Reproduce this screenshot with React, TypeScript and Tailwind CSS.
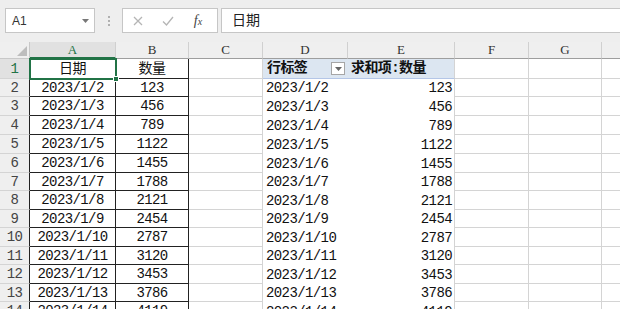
const cols = [
  { key: "A", w: "w-[86px]" },
  { key: "B", w: "w-[73px]" },
  { key: "C", w: "w-[74px]" },
  { key: "D", w: "w-[85px]" },
  { key: "E", w: "w-[107px]" },
  { key: "F", w: "w-[74px]" },
  { key: "G", w: "w-[73px]" },
  { key: "H", w: "w-[80px]" },
];

const values = [123, 456, 789, 1122, 1455, 1788, 2121, 2454, 2787, 3120, 3453, 3786, 4119];

// row heights measured off the sheet
const rowH = [
  "h-[20px]", "h-[18px]", "h-[19px]", "h-[19px]", "h-[19px]", "h-[19px]", "h-[18px]",
  "h-[19px]", "h-[18px]", "h-[19px]", "h-[18px]", "h-[19px]", "h-[18px]", "h-[19px]",
];

const cellFont = { fontFamily: '"Liberation Mono", "Noto Sans CJK SC", monospace' };
const txt = "text-[14px] tracking-[-0.6px] text-[#111]";

function Row({ r }: { r: number }) {
  const isHead = r === 1;
  const a = isHead ? "日期" : `2023/1/${r}`;
  const b = isHead ? "数量" : String(values[r - 2]);
  return (
    <div className={`flex ${rowH[r - 1]}`}>
      <div
        className={`w-[30px] shrink-0 flex items-center justify-center pt-[1px] border-b border-b-[#d4d4d4] border-r text-[14px] tracking-[-0.6px] ${
          isHead ? "bg-[#e1e1e1] text-[#217346] border-r-[#217346]" : "bg-[#efefef] text-[#444] border-r-[#222]"
        }`}
      >
        {r}
      </div>
      <div className={`${cols[0].w} shrink-0 flex items-center justify-center pt-[1px] border-r border-b border-[#222] ${txt}`}>
        {a}
      </div>
      <div className={`${cols[1].w} shrink-0 flex items-center justify-center pt-[1px] border-r border-b border-[#222] ${txt}`}>
        {b}
      </div>
      <div className={`${cols[2].w} shrink-0 border-r border-b border-[#d4d4d4]`} />
      {isHead ? (
        <>
          <div className={`${cols[3].w} shrink-0 flex items-center justify-between pl-[4px] pr-[3px] bg-[#dce6f1] border-b border-[#b4c6e7] ${txt} font-bold`}>
            <span>行标签</span>
            <span className="w-[14px] h-[13px] bg-white border border-[#a6a6a6] flex items-center justify-center">
              <svg width="7" height="4" viewBox="0 0 7 4">
                <path d="M0 0 L7 0 L3.5 4 Z" fill="#666" />
              </svg>
            </span>
          </div>
          <div className={`${cols[4].w} shrink-0 flex items-center pl-[3px] bg-[#dce6f1] border-r border-r-[#d4d4d4] border-b border-b-[#b4c6e7] ${txt} font-bold`}>
            求和项:数量
          </div>
        </>
      ) : (
        <>
          <div className={`${cols[3].w} shrink-0 flex items-center pl-[3px] pt-[1px] whitespace-nowrap ${txt}`}>
            {a}
          </div>
          <div className={`${cols[4].w} shrink-0 flex items-center justify-end pr-[2px] pt-[1px] border-r border-[#d4d4d4] ${txt}`}>
            {b}
          </div>
        </>
      )}
      <div className={`${cols[5].w} shrink-0 border-r border-b border-[#d4d4d4]`} />
      <div className={`${cols[6].w} shrink-0 border-r border-b border-[#d4d4d4]`} />
      <div className={`${cols[7].w} shrink-0 border-b border-[#d4d4d4]`} />
    </div>
  );
}

export default function App() {
  return (
    <div className="w-[620px] h-[309px] overflow-hidden bg-white" style={cellFont}>
      {/* Formula bar */}
      <div
        className="h-[42px] bg-[#eeeeee] flex items-start pt-[8px] pl-[5px]"
        style={{ fontFamily: '"Liberation Sans", "Noto Sans CJK SC", sans-serif' }}
      >
        <div className="w-[90px] h-[25px] bg-white border border-[#c6c6c6] flex items-center justify-between pl-[6px] pr-[5px] text-[12px] text-[#333]">
          <span>A1</span>
          <svg width="7" height="4" viewBox="0 0 7 4">
            <path d="M0 0 L7 0 L3.5 4 Z" fill="#777" />
          </svg>
        </div>
        <div className="w-[27px] h-[25px] flex flex-col items-center justify-center gap-[2px]">
          <span className="w-[2px] h-[2px] bg-[#b0b0b0]" />
          <span className="w-[2px] h-[2px] bg-[#b0b0b0]" />
          <span className="w-[2px] h-[2px] bg-[#b0b0b0]" />
        </div>
        <div className="w-[96px] h-[25px] bg-white border border-[#c6c6c6] flex items-center">
          <span className="w-[30px] flex justify-center">
            <svg width="10" height="10" viewBox="0 0 10 10">
              <path d="M1 1 L9 9 M9 1 L1 9" stroke="#b5b5b5" strokeWidth="1.3" />
            </svg>
          </span>
          <span className="w-[30px] flex justify-center">
            <svg width="12" height="10" viewBox="0 0 12 10">
              <path d="M1 5.5 L4.5 9 L11 1" stroke="#b5b5b5" strokeWidth="1.3" fill="none" />
            </svg>
          </span>
          <span
            className="w-[30px] flex justify-center items-baseline text-[14px] italic text-[#444]"
            style={{ fontFamily: '"Liberation Serif", serif' }}
          >
            f<span className="text-[10px]">x</span>
          </span>
        </div>
        <div className="ml-[3px] flex-1 h-[25px] bg-white border border-[#c6c6c6] border-r-0 flex items-center pl-[10px] text-[14px] text-[#222]">
          日期
        </div>
      </div>

      {/* Grid */}
      <div className="relative">
        {/* Column headers */}
        <div className="flex h-[17px]">
          <div className="w-[30px] shrink-0 bg-[#efefef] border-r border-b border-[#c8c8c8] relative">
            <svg className="absolute right-[2px] bottom-[2px]" width="10" height="10" viewBox="0 0 10 10">
              <path d="M10 0 L10 10 L0 10 Z" fill="#bdbdbd" />
            </svg>
          </div>
          {cols.map((c, i) => (
            <div
              key={c.key}
              className={`${c.w} shrink-0 flex items-center justify-center border-r border-[#d0d0d0] text-[13px] ${
                i === 0
                  ? "bg-[#e1e1e1] text-[#217346] border-b-2 border-b-[#217346]"
                  : "bg-[#efefef] text-[#333] border-b border-b-[#9e9e9e]"
              }`}
              style={{ fontFamily: '"Liberation Serif", serif' }}
            >
              {c.key}
            </div>
          ))}
        </div>

        {Array.from({ length: 14 }, (_, k) => (
          <Row key={k} r={k + 1} />
        ))}

        {/* Selection A1 */}
        <div className="absolute left-[29px] top-[16px] w-[88px] h-[22px] border-2 border-[#217346] pointer-events-none" />
        <div className="absolute left-[113px] top-[34px] w-[6px] h-[6px] bg-[#217346] border border-white" />
      </div>
    </div>
  );
}
